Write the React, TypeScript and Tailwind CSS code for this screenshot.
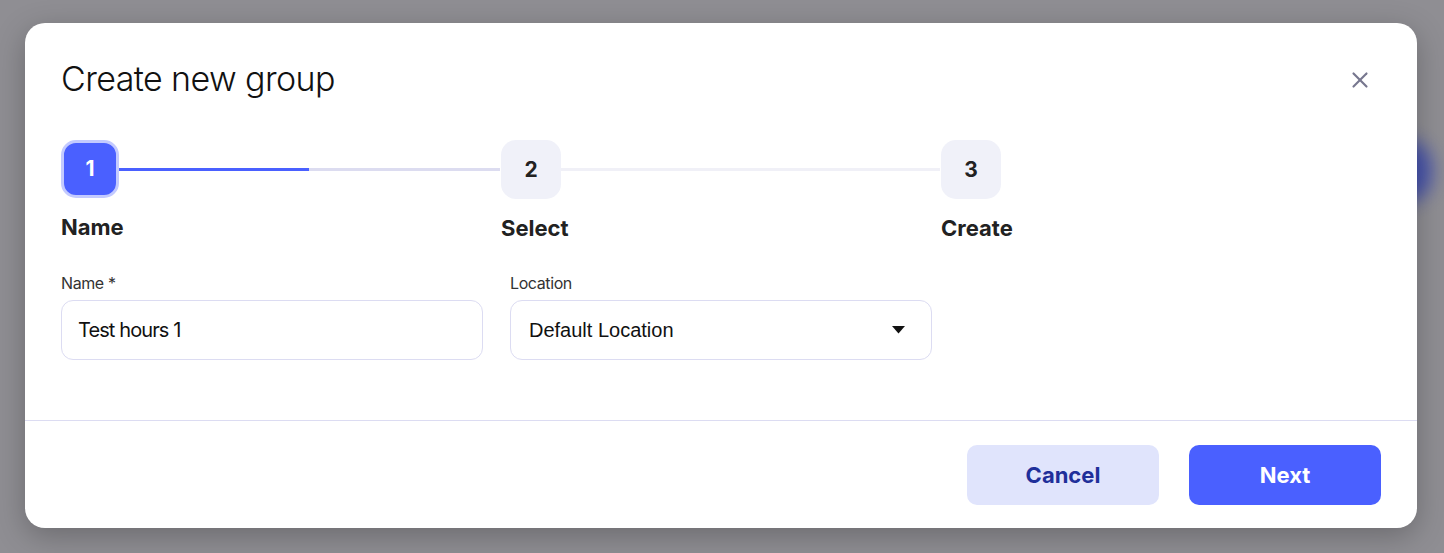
import { X } from "lucide-react";

const steps = [
  { n: 1, label: "Name" },
  { n: 2, label: "Select" },
  { n: 3, label: "Create" },
];

function Stepper() {
  return (
    <div className="relative mt-[39px] w-[939px]">
      {/* connector lines */}
      <div className="absolute left-[58px] top-[28px] h-[3px] w-[190px] bg-[#4a60ff]" />
      <div className="absolute left-[248px] top-[28px] h-[3px] w-[191px] bg-[#dcdcf0]" />
      <div className="absolute left-[499px] top-[28px] h-[3px] w-[380px] bg-[#f0f0f7]" />
      <div className="relative grid grid-cols-[440px_440px_59px]">
        {steps.map((s) => (
          <div key={s.n} className="flex flex-col items-start">
            {s.n === 1 ? (
              <div className="flex h-[58px] w-[58px] items-center justify-center rounded-[15px] border-[3px] border-[#c3caff] bg-[#4a60ff] text-[21px] font-bold text-white">
                {s.n}
              </div>
            ) : (
              <div className="flex h-[59px] w-[60px] items-center justify-center rounded-[15px] bg-[#f0f1f9] text-[21px] font-bold text-[#222]">
                {s.n}
              </div>
            )}
            <div className="mt-[15px] whitespace-nowrap text-[22px] font-bold leading-[28px] text-[#222]">
              {s.label}
            </div>
          </div>
        ))}
      </div>
    </div>
  );
}

export default function App() {
  return (
    <div className="relative flex h-[553px] w-[1444px] items-start overflow-hidden bg-[#8f8e93] pl-[25px] pt-[23px] font-['Inter',sans-serif]">
      <div className="absolute left-[1372px] top-[138px] h-[66px] w-[60px] rounded-full bg-[#3d4bb0] opacity-90 blur-[9px]" />
      <div className="relative flex h-[505px] w-[1392px] flex-col rounded-[20px] bg-white shadow-[0_8px_30px_rgba(0,0,0,0.25)]">
        <div className="flex flex-col pl-[36px] pr-[37px]">
          <div className="flex items-start justify-between pt-[34px]">
            <h1 className="text-[34px] font-light leading-[44px] tracking-[-0.6px] text-[#111]">
              Create new group
            </h1>
            <button className="mr-[7px] mt-[10px] text-[#77778f]">
              <X size={26} strokeWidth={2} />
            </button>
          </div>
          <Stepper />
          <div className="mt-[31px] flex gap-[27px]">
            <div className="flex w-[422px] flex-col">
              <label className="text-[16px] leading-[20px] tracking-[-0.4px] text-[#333]">Name *</label>
              <div className="mt-[7px] flex h-[60px] items-center rounded-[12px] border border-[#dcdcf2] px-[16px] text-[20px] tracking-[-0.9px] text-[#111]">
                Test hours 1
              </div>
            </div>
            <div className="flex w-[422px] flex-col">
              <label className="text-[16px] leading-[20px] tracking-[-0.4px] text-[#333]">Location</label>
              <div className="mt-[7px] flex h-[60px] items-center justify-between rounded-[12px] border border-[#dcdcf2] pl-[18px] pr-[26px] font-['Liberation_Sans',sans-serif] text-[20px] text-[#111]">
                <span>Default Location</span>
                <svg width="13" height="8" viewBox="0 0 13 8">
                  <path d="M0 0 L13 0 L6.5 7.5 Z" fill="#111" />
                </svg>
              </div>
            </div>
          </div>
        </div>
        <div className="mt-auto border-t border-[#dcdcf2]">
          <div className="flex justify-end gap-[30px] px-[36px] pb-[23px] pt-[24px]">
            <button className="flex h-[60px] w-[192px] items-center justify-center rounded-[10px] bg-[#e0e4fc] text-[22px] font-bold text-[#1f2f9a]">
              Cancel
            </button>
            <button className="flex h-[60px] w-[192px] items-center justify-center rounded-[10px] bg-[#4a60ff] text-[22px] font-bold text-white">
              Next
            </button>
          </div>
        </div>
      </div>
    </div>
  );
}
